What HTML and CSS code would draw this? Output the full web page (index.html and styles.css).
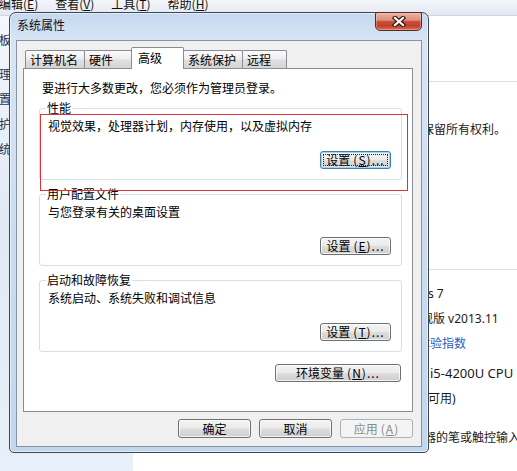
FILE: index.html
```html
<!DOCTYPE html>
<html lang="zh-CN">
<head>
<meta charset="utf-8">
<title>系统属性</title>
<link rel="stylesheet" href="styles.css">
</head>
<body>
<div class="desktop">
  <div class="menubar">
    <span class="menu-item">编辑(<u>E</u>)</span>
    <span class="menu-item">查看(<u>V</u>)</span>
    <span class="menu-item">工具(<u>T</u>)</span>
    <span class="menu-item">帮助(<u>H</u>)</span>
  </div>
  <div class="cp-body">
    <nav class="cp-nav">
      <div class="nav-list">
        <div class="nav-home">控制面板主页</div>
        <div class="nav-link first">设备管理器</div>
        <div class="nav-link">远程设置</div>
        <div class="nav-link">系统保护</div>
        <div class="nav-link">高级系统设置</div>
      </div>
    </nav>
    <main class="cp-main">
      <div class="sep sep-top"></div>
      <div class="info-row copy">保留所有权利。</div>
      <div class="sep sep-sys"></div>
      <div class="info-list">
        <div class="info-row ind-8">s 7</div>
        <div class="info-row ind-1">舰版 v2013.11</div>
        <div class="info-row link ind-n2">体验指数</div>
        <div class="info-row cpu ind-10">i5-4200U CPU <span class="at">@</span></div>
        <div class="info-row ind-8">可用)</div>
        <div class="info-row pen ind-4">器的笔或触控输入</div>
      </div>
    </main>
  </div>
</div>

<div class="dialog">
  <div class="titlebar">
    <span class="title">系统属性</span>
    <button class="close" aria-label="关闭">
      <svg width="14" height="11" viewBox="0 0 14 11">
        <path d="M3 2 L11 9 M11 2 L3 9" stroke="#3a1712" stroke-width="4.4" stroke-linecap="square" fill="none"/>
        <path d="M3 2 L11 9 M11 2 L3 9" stroke="#ffffff" stroke-width="2.2" stroke-linecap="square" fill="none"/>
      </svg>
    </button>
  </div>
  <div class="client">
    <div class="tabs">
      <div class="tab t1">计算机名</div>
      <div class="tab t2">硬件</div>
      <div class="tab t3 active">高级</div>
      <div class="tab t4">系统保护</div>
      <div class="tab t5">远程</div>
    </div>
    <div class="page">
      <p class="notice">要进行大多数更改，您必须作为管理员登录。</p>
      <section class="group">
        <div class="group-title">性能</div>
        <p class="group-desc">视觉效果，处理器计划，内存使用，以及虚拟内存</p>
        <div class="group-actions">
          <button class="btn btn-set focused">设置<span class="acc">(<u>S</u>)...</span></button>
        </div>
      </section>
      <section class="group">
        <div class="group-title">用户配置文件</div>
        <p class="group-desc">与您登录有关的桌面设置</p>
        <div class="group-actions">
          <button class="btn btn-set">设置<span class="acc">(<u>E</u>)...</span></button>
        </div>
      </section>
      <section class="group">
        <div class="group-title">启动和故障恢复</div>
        <p class="group-desc">系统启动、系统失败和调试信息</p>
        <div class="group-actions">
          <button class="btn btn-set">设置<span class="acc">(<u>T</u>)...</span></button>
        </div>
      </section>
      <div class="env-row">
        <button class="btn btn-env">环境变量<span class="acc">(<u>N</u>)...</span></button>
      </div>
      <div class="annot"></div>
    </div>
    <div class="dialog-buttons">
      <button class="btn btn-main">确定</button>
      <button class="btn btn-main">取消</button>
      <button class="btn btn-main" disabled>应用<span class="acc">(<u>A</u>)</span></button>
    </div>
  </div>
</div>
</body>
</html>
```

FILE: styles.css
```css
* { box-sizing: border-box; }
html, body { margin: 0; padding: 0; }
body {
  width: 517px;
  height: 471px;
  overflow: hidden;
  position: relative;
  background: #ffffff;
  font-family: "Noto Sans CJK SC", "Noto Sans", sans-serif;
  font-size: 12px;
  color: #000;
}

/* ---------- background control panel window ---------- */
.desktop {
  width: 517px;
  height: 471px;
  display: flex;
  flex-direction: column;
}
.menubar {
  height: 16px;
  flex: none;
  display: flex;
  gap: 17px;
  background: linear-gradient(#f3f6fa, #e3e8f1);
  border-bottom: 1px solid #cfd6e1;
  overflow: hidden;
}
.menu-item {
  line-height: 12px;
  margin-top: -2px;
  white-space: nowrap;
  color: #111;
}
.menu-item:first-child { margin-left: -1px; }

.cp-body {
  flex: 1;
  display: flex;
  min-height: 0;
}
.cp-nav {
  width: 133px;
  flex: none;
  background: linear-gradient(#f4f7fb, #dfe9f5 45%, #e8f0f9);
  overflow: hidden;
}
.nav-list {
  margin-left: -37px;
  padding-top: 14px;
  white-space: nowrap;
}
.nav-home { line-height: 20px; color: #1b2f4f; }
.nav-link { line-height: 25px; color: #22364f; }
.nav-link.first { margin-top: 11px; }

.cp-main {
  flex: 1;
  background: #fff;
  overflow: hidden;
  padding-left: 287px;
}
.sep { height: 1px; background: #dadee4; }
.sep-top { margin-top: 65px; }
.sep-sys { margin-top: 127px; }
.info-row {
  line-height: 25px;
  white-space: nowrap;
  font-family: "Noto Sans", "Noto Sans CJK SC", sans-serif;
  font-size: 12px;
  color: #1a1a1a;
}
.copy { margin-top: 35px; text-indent: 2px; }
.info-list { margin-top: 11px; }
.link { color: #2a62c2; }
.cpu { margin-top: 5px; font-size: 13px; }
.cpu .at { color: #d2451e; }
.pen { margin-top: 14px; }
.ind-10 { text-indent: 10px; }
.ind-8 { text-indent: 8px; }
.ind-4 { text-indent: 4px; }
.ind-1 { text-indent: 1px; }
.ind-n2 { text-indent: -2px; }

/* ---------- dialog window ---------- */
.dialog {
  position: absolute;
  left: 9px;
  top: 12px;
  width: 420px;
  height: 441px;
  border: 1px solid #3d4754;
  border-radius: 7px 7px 5px 5px;
  background: linear-gradient(#c4d8ef, #d7e5f5 27px, #cbdcf0 55%, #c2d6ee);
  box-shadow: inset 0 0 0 1px rgba(255, 255, 255, 0.55);
  padding: 0 6px 5px 6px;
  display: flex;
  flex-direction: column;
}
.titlebar {
  height: 27px;
  flex: none;
  display: flex;
  justify-content: space-between;
  align-items: flex-start;
}
.title {
  padding-left: 1px;
  margin-top: 4px;
  line-height: 16px;
  color: #101010;
}
.close {
  width: 47px;
  height: 19px;
  margin-top: -1px;
  padding: 0;
  border: 1px solid #5a2a22;
  border-radius: 2px 2px 5px 5px;
  background: linear-gradient(#ebb3a5 0%, #de907e 42%, #c8513b 50%, #bf3f29 75%, #d6735a 100%);
  box-shadow: inset 0 0 0 1px rgba(255, 220, 210, 0.35);
  display: flex;
  align-items: center;
  justify-content: center;
}
.close svg { display: block; }

.client {
  flex: 1;
  border: 1px solid #8593a6;
  background: #f0f0f0;
  padding: 6px 8px 8px 6px;
  display: flex;
  flex-direction: column;
}

.tabs {
  height: 21px;
  flex: none;
  display: flex;
  align-items: flex-end;
  padding-left: 2px;
  position: relative;
  z-index: 1;
}
.tab {
  height: 18px;
  border: 1px solid #898c95;
  border-bottom: none;
  border-radius: 2px 2px 0 0;
  background: linear-gradient(#fbfbfb, #eeeeee 45%, #e0e0e0 55%, #d4d4d4);
  padding-left: 4px;
  line-height: 17px;
  white-space: nowrap;
  margin-left: -1px;
}
.tab:first-child { margin-left: 0; }
.t1 { width: 60px; }
.t2 { width: 48px; }
.t3 { width: 53px; }
.t4 { width: 60px; }
.t5 { width: 45px; }
.tab.active {
  height: 22px;
  margin-bottom: -1px;
  background: #fff;
  padding-left: 6px;
  padding-top: 1px;
  position: relative;
  z-index: 2;
}

.page {
  height: 344px;
  flex: none;
  border: 1px solid #898c95;
  background: #fff;
  padding: 11px 10px 0 15px;
  position: relative;
}
.notice {
  margin: 0 0 0 3px;
  line-height: 16px;
}
.group {
  margin-top: 12px;
  border: 1px solid #d5dfe5;
  border-radius: 3px;
  padding: 0 10px 10px 8px;
}
.group + .group { margin-top: 14px; }
.group-title {
  width: fit-content;
  margin: -9px 0 0 -2px;
  padding: 0 1px;
  background: #fff;
  line-height: 16px;
}
.group-desc {
  margin: 2px 0 0 0;
  line-height: 16px;
}
.group-actions {
  display: flex;
  justify-content: flex-end;
  margin-top: 17px;
}
.env-row {
  display: flex;
  justify-content: flex-end;
  margin: 12px 1px 0 0;
}

.annot {
  position: absolute;
  left: 16px;
  top: 45px;
  width: 368px;
  height: 77px;
  border: 1px solid #d4353a;
  pointer-events: none;
}

.dialog-buttons {
  display: flex;
  justify-content: flex-end;
  gap: 8px;
  margin-top: 7px;
}

/* ---------- buttons ---------- */
.btn {
  font: inherit;
  font-size: 12px;
  color: #000;
  border: 1px solid #707070;
  border-radius: 3px;
  background: linear-gradient(#f3f3f3 0%, #ebebeb 48%, #dddddd 52%, #cfcfcf 100%);
  box-shadow: inset 0 0 0 1px rgba(255, 255, 255, 0.75);
  padding: 0;
  line-height: 16px;
  display: flex;
  align-items: center;
  justify-content: center;
  white-space: nowrap;
  position: relative;
}
.btn-set { width: 71px; height: 18px; }
.btn-env { width: 126px; height: 18px; }
.btn-main { width: 73px; height: 19px; }
.acc {
  margin-left: 3px;
  letter-spacing: 1px;
}
.btn.focused {
  border-color: #3c7fb1;
  box-shadow: inset 0 0 0 1px #9fd5f2, inset 0 0 0 2px rgba(255, 255, 255, 0.4);
}
.btn.focused::after {
  content: "";
  position: absolute;
  left: 2px;
  top: 2px;
  right: 2px;
  bottom: 2px;
  border: 1px dotted #222;
}
.btn:disabled {
  color: #8b8b8b;
  border-color: #adb2b5;
  background: #f4f4f4;
  box-shadow: none;
}
```
